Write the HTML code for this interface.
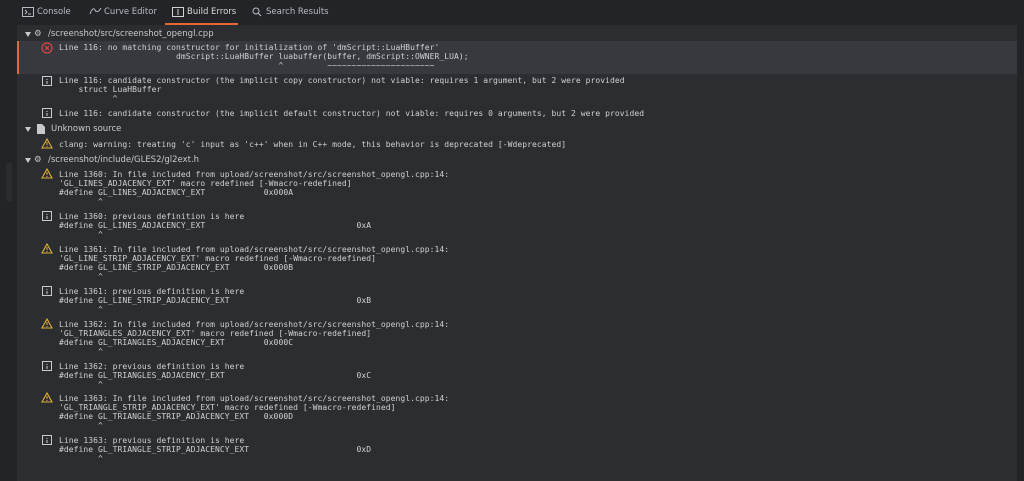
<!DOCTYPE html>
<html><head><meta charset="utf-8"><style>
html,body{margin:0;padding:0;width:1024px;height:481px;overflow:hidden;background:#222428;}
body{position:relative;font-family:"DejaVu Sans","Liberation Sans",sans-serif;}
.top{position:absolute;left:0;top:0;width:1024px;height:25px;background:#222428;}
.tab{position:absolute;top:5px;font-size:8.5px;color:#b8bcc0;line-height:14px;}
.panel{position:absolute;left:17px;top:25px;width:1000px;height:456px;background:#2b2d31;}
.sel{position:absolute;left:17px;top:41px;width:1000px;height:33px;background:#363a3e;border-left:2px solid #e8662f;box-sizing:border-box;}
pre{position:absolute;margin:0;left:59px;font-family:"DejaVu Sans Mono","Liberation Mono",monospace;font-size:8px;letter-spacing:0.06px;line-height:9px;color:#cfd1d3;white-space:pre;}
.hd{position:absolute;font-size:8.5px;color:#c8cacc;line-height:12px;}
.arr{position:absolute;width:0;height:0;border-left:3px solid transparent;border-right:3px solid transparent;border-top:5px solid #c8cacc;}
svg{position:absolute;}
</style></head><body>
<div class="top"></div>
<svg style="left:22px;top:7px" width="12" height="10"><rect x="0.5" y="0.5" width="11" height="9" fill="none" stroke="#b8bcc0"/><path d="M3 3l2 2-2 2M6 7h3" stroke="#b8bcc0" fill="none"/></svg>
<div class="tab" style="left:37px">Console</div>
<svg style="left:89px;top:7px" width="13" height="8"><path d="M1 7C3 1 5 1 6 3S9 6 12 1" stroke="#b8bcc0" fill="none"/></svg>
<div class="tab" style="left:104px">Curve Editor</div>
<svg style="left:172px;top:7px" width="12" height="10"><rect x="0.5" y="0.5" width="11" height="9" fill="none" stroke="#d0d2d4"/><path d="M6 2v6" stroke="#d0d2d4"/></svg>
<div class="tab" style="left:187px;color:#d8dadc">Build Errors</div>
<div style="position:absolute;left:165px;top:23px;width:73px;height:2px;background:#e8662f"></div>
<svg style="left:252px;top:7px" width="10" height="10"><circle cx="4" cy="4" r="3" fill="none" stroke="#b8bcc0"/><path d="M6 6l3 3" stroke="#b8bcc0"/></svg>
<div class="tab" style="left:266px">Search Results</div>

<div class="panel"></div>
<div style="position:absolute;left:6px;top:163px;width:6px;height:38px;background:#2a2c30"></div>
<div class="sel"></div>

<div class="arr" style="left:25px;top:32px"></div>
<div class="hd" style="left:34px;top:28px;color:#c8cacc">⚙</div>
<div class="hd" style="left:48px;top:28px">/screenshot/src/screenshot_opengl.cpp</div>

<svg style="left:41px;top:42px" width="12" height="12"><circle cx="6" cy="6" r="5" fill="none" stroke="#e0454a" stroke-width="1.2"/><path d="M4 4l4 4M8 4l-4 4" stroke="#e0454a" stroke-width="1.2"/></svg>
<pre style="top:43px">Line 116: no matching constructor for initialization of 'dmScript::LuaHBuffer'
                        dmScript::LuaHBuffer luabuffer(buffer, dmScript::OWNER_LUA);
                                             ^         ~~~~~~~~~~~~~~~~~~~~~~</pre>

<svg style="left:42px;top:76px" width="10" height="10"><rect x="0.5" y="0.5" width="9" height="9" fill="none" stroke="#c8cacc"/><path d="M5 3v1M5 5v3" stroke="#c8cacc"/></svg>
<pre style="top:76px">Line 116: candidate constructor (the implicit copy constructor) not viable: requires 1 argument, but 2 were provided
    struct LuaHBuffer
           ^</pre>
<svg style="left:42px;top:108px" width="10" height="10"><rect x="0.5" y="0.5" width="9" height="9" fill="none" stroke="#c8cacc"/><path d="M5 3v1M5 5v3" stroke="#c8cacc"/></svg>
<pre style="top:109px">Line 116: candidate constructor (the implicit default constructor) not viable: requires 0 arguments, but 2 were provided</pre>

<div class="arr" style="left:25px;top:127px"></div>
<svg style="left:37px;top:124px" width="8" height="10"><path d="M0 0h5l3 3v7H0z" fill="#c8cacc"/></svg>
<div class="hd" style="left:51px;top:123px">Unknown source</div>

<svg style="left:41px;top:138px" width="12" height="11"><path d="M6 1L11 10H1z" fill="none" stroke="#e0b030" stroke-width="1.1"/><path d="M6 4v3M6 8v1" stroke="#e0b030"/></svg>
<pre style="top:140px">clang: warning: treating 'c' input as 'c++' when in C++ mode, this behavior is deprecated [-Wdeprecated]</pre>

<div class="arr" style="left:25px;top:158px"></div>
<div class="hd" style="left:34px;top:154px">⚙</div>
<div class="hd" style="left:48px;top:154px">/screenshot/include/GLES2/gl2ext.h</div>

<svg style="left:41px;top:168px" width="12" height="11"><path d="M6 1L11 10H1z" fill="none" stroke="#e0b030" stroke-width="1.1"/><path d="M6 4v3M6 8v1" stroke="#e0b030"/></svg>
<pre style="top:170px">Line 1360: In file included from upload/screenshot/src/screenshot_opengl.cpp:14:
'GL_LINES_ADJACENCY_EXT' macro redefined [-Wmacro-redefined]
#define GL_LINES_ADJACENCY_EXT            0x000A
        ^</pre>
<svg style="left:42px;top:211px" width="10" height="10"><rect x="0.5" y="0.5" width="9" height="9" fill="none" stroke="#c8cacc"/><path d="M5 3v1M5 5v3" stroke="#c8cacc"/></svg>
<pre style="top:212px">Line 1360: previous definition is here
#define GL_LINES_ADJACENCY_EXT                               0xA
        ^</pre>

<svg style="left:41px;top:243px" width="12" height="11"><path d="M6 1L11 10H1z" fill="none" stroke="#e0b030" stroke-width="1.1"/><path d="M6 4v3M6 8v1" stroke="#e0b030"/></svg>
<pre style="top:245px">Line 1361: In file included from upload/screenshot/src/screenshot_opengl.cpp:14:
'GL_LINE_STRIP_ADJACENCY_EXT' macro redefined [-Wmacro-redefined]
#define GL_LINE_STRIP_ADJACENCY_EXT       0x000B
        ^</pre>
<svg style="left:42px;top:286px" width="10" height="10"><rect x="0.5" y="0.5" width="9" height="9" fill="none" stroke="#c8cacc"/><path d="M5 3v1M5 5v3" stroke="#c8cacc"/></svg>
<pre style="top:287px">Line 1361: previous definition is here
#define GL_LINE_STRIP_ADJACENCY_EXT                          0xB
        ^</pre>

<svg style="left:41px;top:318px" width="12" height="11"><path d="M6 1L11 10H1z" fill="none" stroke="#e0b030" stroke-width="1.1"/><path d="M6 4v3M6 8v1" stroke="#e0b030"/></svg>
<pre style="top:320px">Line 1362: In file included from upload/screenshot/src/screenshot_opengl.cpp:14:
'GL_TRIANGLES_ADJACENCY_EXT' macro redefined [-Wmacro-redefined]
#define GL_TRIANGLES_ADJACENCY_EXT        0x000C
        ^</pre>
<svg style="left:42px;top:361px" width="10" height="10"><rect x="0.5" y="0.5" width="9" height="9" fill="none" stroke="#c8cacc"/><path d="M5 3v1M5 5v3" stroke="#c8cacc"/></svg>
<pre style="top:362px">Line 1362: previous definition is here
#define GL_TRIANGLES_ADJACENCY_EXT                           0xC
        ^</pre>

<svg style="left:41px;top:392px" width="12" height="11"><path d="M6 1L11 10H1z" fill="none" stroke="#e0b030" stroke-width="1.1"/><path d="M6 4v3M6 8v1" stroke="#e0b030"/></svg>
<pre style="top:394px">Line 1363: In file included from upload/screenshot/src/screenshot_opengl.cpp:14:
'GL_TRIANGLE_STRIP_ADJACENCY_EXT' macro redefined [-Wmacro-redefined]
#define GL_TRIANGLE_STRIP_ADJACENCY_EXT   0x000D
        ^</pre>
<svg style="left:42px;top:435px" width="10" height="10"><rect x="0.5" y="0.5" width="9" height="9" fill="none" stroke="#c8cacc"/><path d="M5 3v1M5 5v3" stroke="#c8cacc"/></svg>
<pre style="top:436px">Line 1363: previous definition is here
#define GL_TRIANGLE_STRIP_ADJACENCY_EXT                      0xD
        ^</pre>
</body></html>
